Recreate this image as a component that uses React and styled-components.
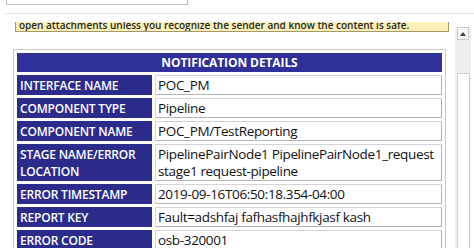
import React from "react";
import styled, { createGlobalStyle } from "styled-components";

const Global = createGlobalStyle`
  html, body { margin: 0; padding: 0; background: #fff; }
  body { width: 474px; height: 248px; overflow: hidden; font-family: "Open Sans", "Noto Sans", sans-serif; }
`;

const Page = styled.div`
  width: 474px;
  height: 248px;
  display: flex;
  flex-direction: column;
  overflow: hidden;
`;

const TopBox = styled.div`
  margin-left: 6px;
  width: 180px;
  height: 4px;
  border: 1px solid #bdbdbd;
  border-top: none;
  background: #fff;
`;

const Separator = styled.div`
  margin: 8px 0 0 5px;
  height: 1px;
  background: #e2e2e2;
`;

const Body = styled.div`
  flex: 1;
  display: flex;
  min-height: 0;
  margin-top: 8px;
`;

const Viewport = styled.div`
  width: 455px;
  overflow: hidden;
`;

const Content = styled.div`
  margin-top: -7px;
  display: flex;
  flex-direction: column;
`;

const Banner = styled.div`
  margin-left: 15px;
  width: 425px;
  height: 16px;
  background: #fcf0b6;
  border: 1px solid #a5996a;
  border-top: none;
  padding: 0 4px 0 3px;
  font-size: 10px;
  line-height: 12px;
  font-weight: 600;
  color: #262626;
  white-space: nowrap;
  overflow: hidden;
  display: flex;
  align-items: flex-end;
`;

const Table = styled.table`
  margin: 17px 0 0 13px;
  border: 1px solid #c8c8c8;
  border-spacing: 3px;
  border-collapse: separate;
  width: 433px;
`;

const HeadCell = styled.th`
  background: #30309a;
  color: #fff;
  font-size: 12px;
  font-weight: 700;
  height: 19px;
  padding: 0;
  text-align: center;
  letter-spacing: -0.1px;
`;

const Label = styled.td`
  width: 129px;
  background: #2b2b8c;
  color: #fff;
  font-size: 12px;
  font-weight: 600;
  padding: 0 3px;
  height: ${(p) => (p.$tall ? 37 : 20)}px;
  line-height: 17px;
  letter-spacing: -0.2px;
  vertical-align: middle;
`;

const Value = styled.td`
  background: #fff;
  border: 1px solid #b4b4b4;
  border-top-color: #d4d4d4;
  border-left-color: #d4d4d4;
  color: #111;
  font-size: 13.5px;
  padding: 0 2px;
  line-height: 17px;
  letter-spacing: -0.35px;
  vertical-align: middle;
`;

const ScrollBar = styled.div`
  width: 16px;
  margin-top: 5px;
  background: #efefef;
  display: flex;
  flex-direction: column;
  align-items: center;
`;

const ArrowBtn = styled.div`
  width: 10px;
  height: 11px;
  border: 1px solid #c9c9c9;
  background: #f7f7f7;
  display: flex;
  align-items: center;
  justify-content: center;
`;

const Thumb = styled.div`
  margin-top: 33px;
  flex: 1;
  width: 11px;
  background: #fff;
  border: 1px solid #cfcfcf;
  border-bottom: none;
`;

const rows = [
  ["INTERFACE NAME", "POC_PM"],
  ["COMPONENT TYPE", "Pipeline"],
  ["COMPONENT NAME", "POC_PM/TestReporting"],
  ["STAGE NAME/ERROR LOCATION", "PipelinePairNode1 PipelinePairNode1_request stage1 request-pipeline", true],
  ["ERROR TIMESTAMP", "2019-09-16T06:50:18.354-04:00"],
  ["REPORT KEY", "Fault=adshfaj fafhasfhajhfkjasf kash"],
  ["ERROR CODE", "osb-320001"],
];

export default function App() {
  return (
    <Page>
      <Global />
      <TopBox />
      <Separator />
      <Body>
        <Viewport>
          <Content>
            <Banner>
              open attachments unless you recognize the sender and know the content is safe.
            </Banner>
            <Table>
              <thead>
                <tr>
                  <HeadCell colSpan={2}>NOTIFICATION DETAILS</HeadCell>
                </tr>
              </thead>
              <tbody>
                {rows.map(([k, v, tall]) => (
                  <tr key={k}>
                    <Label $tall={tall}>{k}</Label>
                    <Value>{v}</Value>
                  </tr>
                ))}
              </tbody>
            </Table>
          </Content>
        </Viewport>
        <ScrollBar>
          <ArrowBtn>
            <svg width="6" height="4" viewBox="0 0 6 4">
              <path d="M0 4 L3 0 L6 4 Z" fill="#444" />
            </svg>
          </ArrowBtn>
          <Thumb />
        </ScrollBar>
      </Body>
    </Page>
  );
}
